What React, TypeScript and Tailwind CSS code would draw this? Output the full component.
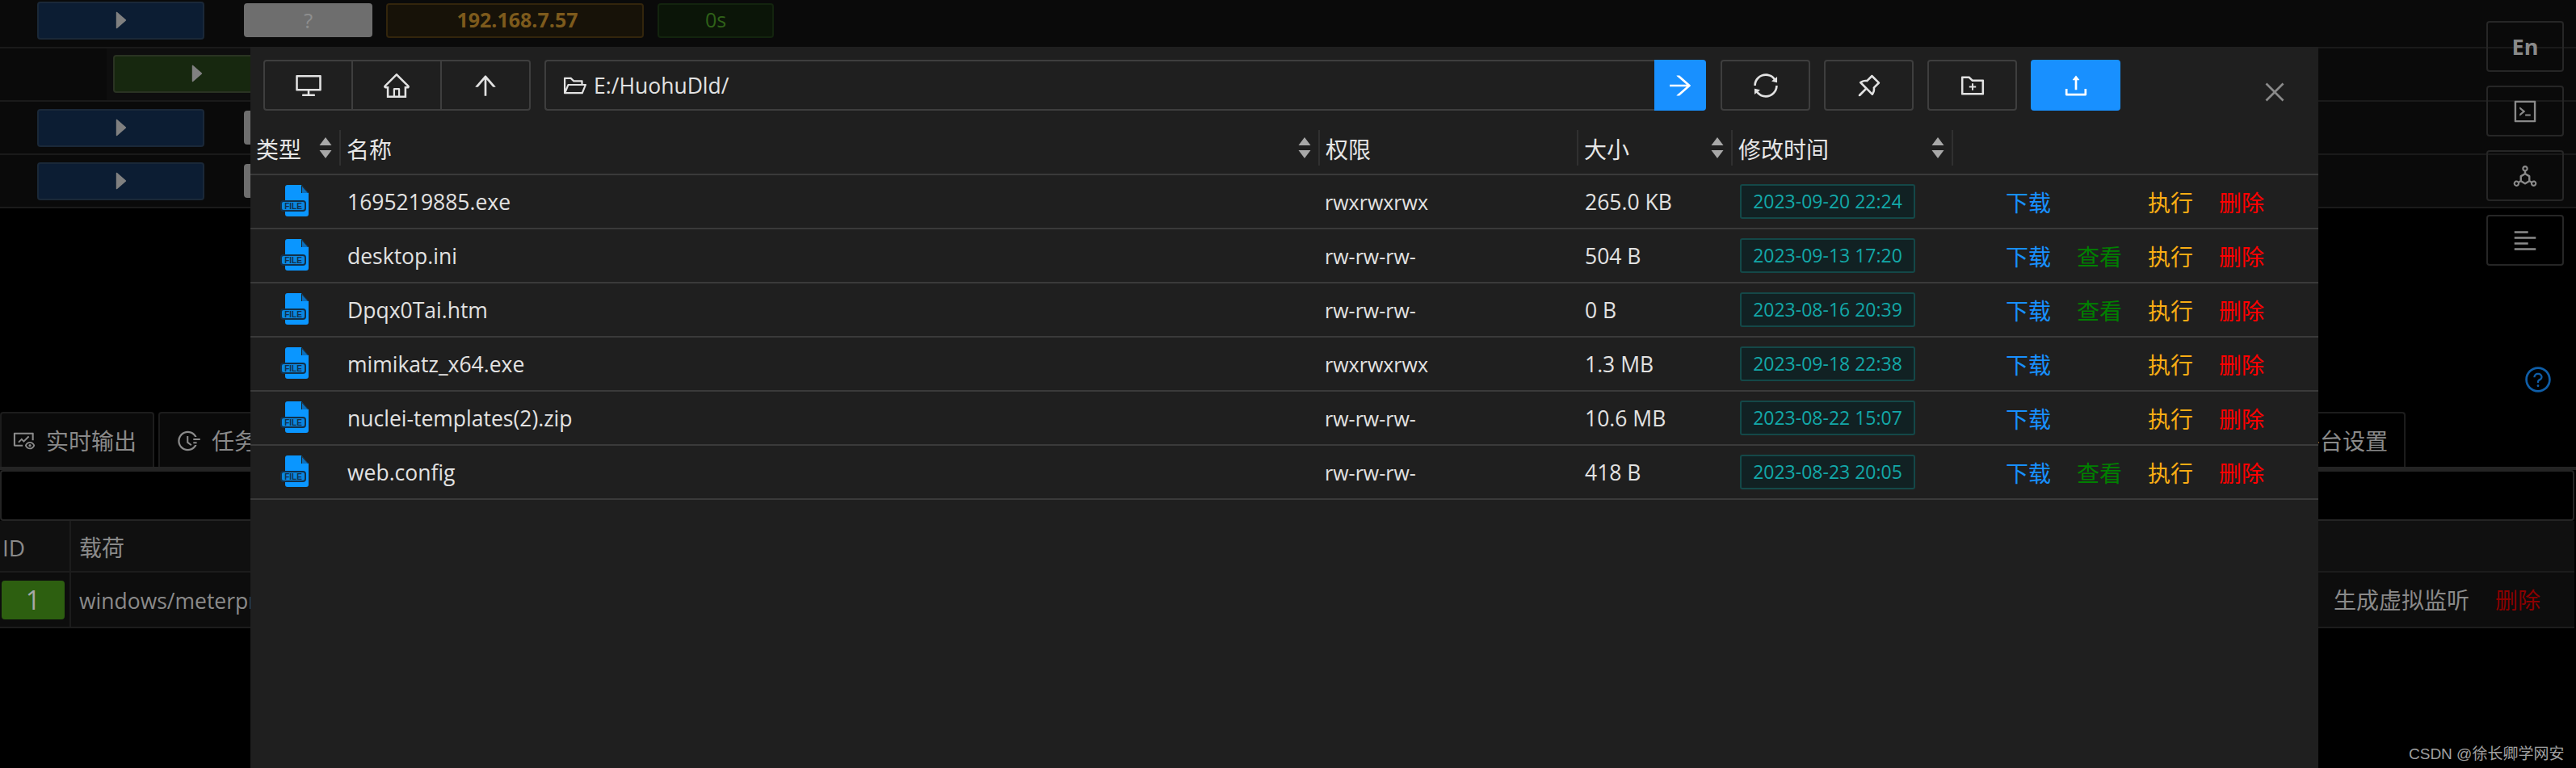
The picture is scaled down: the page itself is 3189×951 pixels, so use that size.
import {
  AiFillCaretRight,
  AiOutlineAlignLeft,
  AiOutlineArrowRight,
  AiOutlineArrowUp,
  AiOutlineClose,
  AiOutlineCode,
  AiOutlineDeploymentUnit,
  AiOutlineDesktop,
  AiOutlineFieldTime,
  AiOutlineFolderAdd,
  AiOutlineFolderOpen,
  AiOutlineFundView,
  AiOutlineHome,
  AiOutlinePushpin,
  AiOutlineQuestionCircle,
  AiOutlineSync,
  AiOutlineUpload,
} from "react-icons/ai";

const files = [
  { name: "1695219885.exe", mode: "rwxrwxrwx", size: "265.0 KB", time: "2023-09-20 22:24", view: false },
  { name: "desktop.ini", mode: "rw-rw-rw-", size: "504 B", time: "2023-09-13 17:20", view: true },
  { name: "Dpqx0Tai.htm", mode: "rw-rw-rw-", size: "0 B", time: "2023-08-16 20:39", view: true },
  { name: "mimikatz_x64.exe", mode: "rwxrwxrwx", size: "1.3 MB", time: "2023-09-18 22:38", view: false },
  { name: "nuclei-templates(2).zip", mode: "rw-rw-rw-", size: "10.6 MB", time: "2023-08-22 15:07", view: false },
  { name: "web.config", mode: "rw-rw-rw-", size: "418 B", time: "2023-08-23 20:05", view: true },
];

const SortCaret = () => (
  <svg width="16" height="26" viewBox="0 0 16 26" className="shrink-0">
    <polygon points="8,0 15.5,10 0.5,10" fill="#a8a8a8" />
    <polygon points="0.5,16 15.5,16 8,26" fill="#a8a8a8" />
  </svg>
);

const FileIcon = () => (
  <svg width="36" height="39" viewBox="0 0 36 39">
    <path d="M9 0h17l9 10v26a3 3 0 0 1-3 3H9a3 3 0 0 1-3-3V3a3 3 0 0 1 3-3z" fill="#0a96ff" />
    <path d="M26 0l9 10h-9z" fill="#1f1f1f" />
    <path d="M27 2l7 8h-7z" fill="#0b6fbd" />
    <rect x="1" y="20" width="30" height="12" rx="3" fill="#0a86e0" stroke="#12304a" strokeWidth="2" />
    <text x="16" y="30" textAnchor="middle" fontSize="10" fill="#12304a" fontWeight="600" fontFamily="Liberation Sans, sans-serif">
      FILE
    </text>
  </svg>
);

const HeaderCell = ({ label, width, sort }: { label?: string; width: string; sort?: boolean }) => (
  <div className={`${width} shrink-0 h-[44px] flex items-center justify-between pl-[7px] pr-[9px] border-l-2 border-[#303030] first:border-l-0`}>
    <span className="pt-[4px] text-[28px] text-[#e6e6e6]">{label}</span>
    {sort && <SortCaret />}
  </div>
);

const FileRow = ({ file }: { file: (typeof files)[number] }) => (
  <div className="flex h-[67px] items-center border-b-2 border-[#3a3a3a] text-[26.5px] text-[#e2e2e2]">
    <div className="w-[110px] shrink-0 pb-[2px] pl-[37px]">
      <FileIcon />
    </div>
    <div className="w-[1212px] shrink-0 pl-[10px] pt-[3px]">{file.name}</div>
    <div className="w-[320px] shrink-0 pl-[8px] pt-[3px] text-[25px]">{file.mode}</div>
    <div className="w-[191px] shrink-0 pl-[10px] pt-[3px]">{file.size}</div>
    <div className="w-[273px] shrink-0 pl-[11px]">
      <span className="flex h-[43px] w-[217px] items-center justify-center rounded-[3px] border-2 border-[#144848] bg-[#112123] text-[23px] text-[#13a8a8]">
        {file.time}
      </span>
    </div>
    <div className="flex gap-[32px] pl-[67px] pt-[3px] text-[28px]">
      <span className="w-[56px] text-[#1890ff]">下载</span>
      <span className="w-[56px] text-[#008000]">{file.view ? "查看" : ""}</span>
      <span className="w-[56px] text-[#faad14]">执行</span>
      <span className="w-[56px] text-[#ff0000]">删除</span>
    </div>
  </div>
);

const ToolButton = ({ children, primary }: { children: React.ReactNode; primary?: boolean }) => (
  <button
    className={`flex h-[63px] w-[111px] items-center justify-center rounded-[4px] border-2 text-[36px] ${
      primary ? "border-[#1890ff] bg-[#1890ff] text-white" : "border-[#3e3e3e] text-[#e2e2e2]"
    }`}
  >
    {children}
  </button>
);

const BgButton = ({ tone }: { tone: "blue" | "green" }) => (
  <div
    className={`flex h-[47px] w-[207px] shrink-0 items-center justify-center rounded-[4px] border-2 text-[#808080] text-[30px] ${
      tone === "blue" ? "bg-[#0c1d33] border-[#1a2838]" : "bg-[#17280f] border-[#2a3322]"
    }`}
  >
    <AiFillCaretRight />
  </div>
);

const SideButton = ({ children }: { children: React.ReactNode }) => (
  <div className="flex h-[63px] w-[96px] items-center justify-center rounded-[4px] border-2 border-[#262626] text-[34px] text-[#8a8a8a]">
    {children}
  </div>
);

const App = () => {
  return (
    <div className="relative h-[951px] w-[3189px] overflow-hidden bg-black font-['Open_Sans','Noto_Sans_CJK_SC',sans-serif]">
      {/* page behind the dialog */}
      <div className="flex h-[60px] items-center border-b-2 border-[#1a1a1a] bg-[#0a0a0a] pb-[8px] pl-[46px]">
        <BgButton tone="blue" />
        <div className="ml-[49px] flex h-[42px] w-[159px] items-center justify-center rounded-[4px] bg-[#6e6e6e] text-[26px] text-[#8e8e8e]">?</div>
        <div className="ml-[17px] flex h-[43px] w-[319px] items-center justify-center rounded-[4px] border-2 border-[#33250c] bg-[#171208] pl-[6px] text-[25px] font-bold text-[#7d5a1c]">
          192.168.7.57
        </div>
        <div className="ml-[17px] flex h-[43px] w-[144px] items-center justify-center rounded-[4px] border-2 border-[#13240e] bg-[#0b1508] text-[25px] text-[#2f6118]">0s</div>
      </div>
      <div className="flex h-[66px] items-center border-b-2 border-[#1a1a1a] bg-[#0a0a0a] pl-[132px]">
        <div className="flex h-full items-center bg-[#0e0e0e] pl-[8px] pb-[2px]">
          <BgButton tone="green" />
        </div>
      </div>
      {[0, 1].map((i) => (
        <div key={i} className="flex h-[66px] items-center border-b-2 border-[#1a1a1a] bg-[#0a0a0a] pl-[46px]">
          <BgButton tone="blue" />
          <div className="ml-[49px] h-[42px] w-[159px] rounded-[4px] bg-[#6e6e6e]" />
        </div>
      ))}

      <div className="mt-[252px] flex h-[72px] border-b-4 border-[#242424] text-[28px] text-[#8a8a8a]">
        <div className="flex w-[191px] items-center gap-[12px] rounded-t-[4px] border-2 border-b-0 border-[#1c1c1c] bg-[#0a0a0a] pl-[13px] pt-[2px]">
          <AiOutlineFundView className="text-[30px]" />
          实时输出
        </div>
        <div className="ml-[5px] flex w-[400px] items-center gap-[12px] rounded-t-[4px] border-2 border-b-0 border-[#1c1c1c] bg-[#0a0a0a] pl-[20px] pt-[2px]">
          <AiOutlineFieldTime className="text-[32px]" />
          任务列表
        </div>
        <div className="ml-[2182px] flex w-[200px] items-center justify-end rounded-t-[4px] border-2 border-b-0 border-[#1c1c1c] pr-[20px] pt-[2px]">
          平台设置
        </div>
      </div>
      <div className="h-[63px] w-[3187px] rounded-[4px] border-2 border-[#242424]" />
      <div className="w-[3187px] text-[26.5px] text-[#8a8a8a]">
        <div className="flex h-[64px] items-center border-b-2 border-[#1c1c1c] bg-[#101010] text-[28px]">
          <div className="w-[88px] border-r-2 border-[#1c1c1c] pl-[3px] pt-[4px] leading-[58px]">ID</div>
          <div className="pl-[10px] pt-[4px]">载荷</div>
        </div>
        <div className="flex h-[69px] items-center border-b-2 border-[#1c1c1c] bg-[#0d0d0d]">
          <div className="flex h-full w-[88px] items-center border-r-2 border-[#1c1c1c] pl-[2px]">
            <div className="flex h-[48px] w-[78px] items-center justify-center rounded-[4px] bg-[#2d5f10] text-[32px] text-[#a8a8a8]">1</div>
          </div>
          <div className="flex-1 pl-[10px] pt-[4px]">windows/meterpreter/reverse_tcp</div>
          <div className="flex gap-[32px] pr-[42px] text-[28px]">
            <span>生成虚拟监听</span>
            <span className="text-[#8b0000]">删除</span>
          </div>
        </div>
      </div>

      {/* floating tool buttons */}
      <div className="absolute left-[3078px] top-[26px] flex flex-col gap-[17px]">
        <SideButton>
          <span className="pt-[2px] text-[27px] font-bold">En</span>
        </SideButton>
        <SideButton>
          <AiOutlineCode />
        </SideButton>
        <SideButton>
          <AiOutlineDeploymentUnit />
        </SideButton>
        <SideButton>
          <AiOutlineAlignLeft />
        </SideButton>
      </div>
      <AiOutlineQuestionCircle className="absolute left-[3124px] top-[452px] text-[36px] text-[#0f5ea8]" />

      {/* file manager dialog */}
      <div className="absolute left-[310px] top-[58px] h-[893px] w-[2560px] bg-[#1f1f1f]">
        <div className="relative flex items-center pl-[16px] pt-[16px]">
          <div className="flex h-[63px] w-[331px] rounded-[4px] border-2 border-[#3e3e3e] text-[36px] text-[#e2e2e2]">
            <div className="flex w-[109px] items-center justify-center border-r-2 border-[#3e3e3e]">
              <AiOutlineDesktop />
            </div>
            <div className="flex w-[110px] items-center justify-center border-r-2 border-[#3e3e3e]">
              <AiOutlineHome />
            </div>
            <div className="flex flex-1 items-center justify-center">
              <AiOutlineArrowUp />
            </div>
          </div>
          <div className="ml-[17px] flex h-[63px] w-[1374px] items-center rounded-l-[4px] border-2 border-r-0 border-[#3e3e3e] pl-[20px] text-[26.5px] text-[#e2e2e2]">
            <AiOutlineFolderOpen className="mr-[7px] text-[32px]" />
            <span className="pt-[3px]">E:/HuohuDld/</span>
          </div>
          <div className="flex h-[63px] w-[64px] items-center justify-center rounded-r-[4px] bg-[#1890ff] text-[36px] text-white">
            <AiOutlineArrowRight />
          </div>
          <div className="ml-[18px] flex gap-[17px]">
            <ToolButton>
              <AiOutlineSync />
            </ToolButton>
            <ToolButton>
              <AiOutlinePushpin />
            </ToolButton>
            <ToolButton>
              <AiOutlineFolderAdd />
            </ToolButton>
            <ToolButton primary>
              <AiOutlineUpload />
            </ToolButton>
          </div>
          <AiOutlineClose className="absolute left-[2489px] top-[39px] text-[34px] text-[#8a8a8a]" />
        </div>

        <div className="flex h-[80px] items-center border-b-2 border-[#3a3a3a] pt-[14px]">
          <HeaderCell label="类型" width="w-[110px]" sort />
          <HeaderCell label="名称" width="w-[1212px]" sort />
          <HeaderCell label="权限" width="w-[320px]" />
          <HeaderCell label="大小" width="w-[191px]" sort />
          <HeaderCell label="修改时间" width="w-[273px]" sort />
          <div className="h-[44px] border-l-2 border-[#303030]" />
        </div>
        {files.map((file) => (
          <FileRow key={file.name} file={file} />
        ))}
      </div>

      <div className="absolute left-[2982px] top-[920px] font-['Liberation_Sans','Noto_Sans_CJK_SC',sans-serif] text-[19px] text-[#a0a0a0]">
        CSDN @徐长卿学网安
      </div>
    </div>
  );
};

export default App;
